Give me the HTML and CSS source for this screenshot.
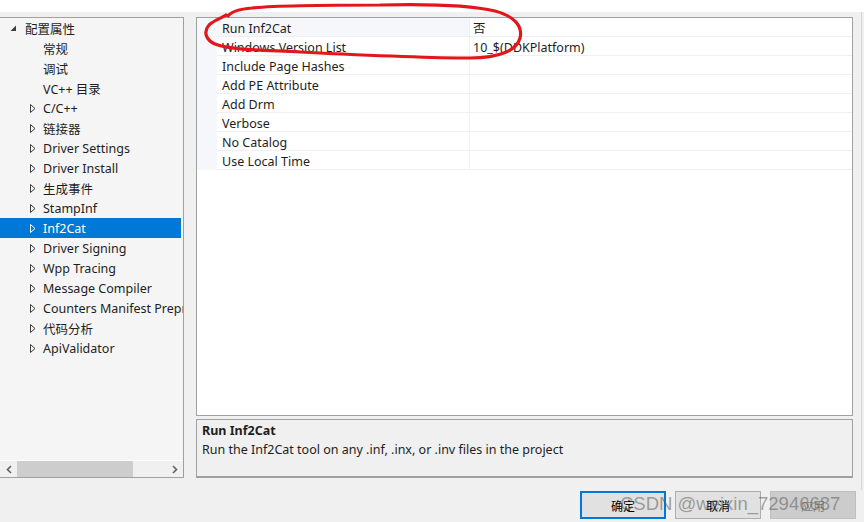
FILE: index.html
```html
<!DOCTYPE html>
<html lang="zh">
<head>
<meta charset="utf-8">
<title>属性页</title>
<link rel="stylesheet" href="styles.css">
</head>
<body>
<div class="topstrip"></div>
<div class="main">
  <div class="tree-panel">
    <div class="tree">
      <div class="node root"><span class="tw"><svg width="7" height="7" viewBox="0 0 7 7"><path d="M6 0.5 L6 6 L0.5 6 Z" fill="#3c3c3c"/></svg></span><span class="label">配置属性</span></div>
      <div class="node leaf"><span class="label">常规</span></div>
      <div class="node leaf"><span class="label">调试</span></div>
      <div class="node leaf"><span class="label">VC++ 目录</span></div>
      <div class="node"><span class="tw"><svg width="6" height="9" viewBox="0 0 6 9"><path d="M0.5 0.5 L5 4.5 L0.5 8.5 Z" fill="none" stroke="#3c3c3c"/></svg></span><span class="label">C/C++</span></div>
      <div class="node"><span class="tw"><svg width="6" height="9" viewBox="0 0 6 9"><path d="M0.5 0.5 L5 4.5 L0.5 8.5 Z" fill="none" stroke="#3c3c3c"/></svg></span><span class="label">链接器</span></div>
      <div class="node"><span class="tw"><svg width="6" height="9" viewBox="0 0 6 9"><path d="M0.5 0.5 L5 4.5 L0.5 8.5 Z" fill="none" stroke="#3c3c3c"/></svg></span><span class="label">Driver Settings</span></div>
      <div class="node"><span class="tw"><svg width="6" height="9" viewBox="0 0 6 9"><path d="M0.5 0.5 L5 4.5 L0.5 8.5 Z" fill="none" stroke="#3c3c3c"/></svg></span><span class="label">Driver Install</span></div>
      <div class="node"><span class="tw"><svg width="6" height="9" viewBox="0 0 6 9"><path d="M0.5 0.5 L5 4.5 L0.5 8.5 Z" fill="none" stroke="#3c3c3c"/></svg></span><span class="label">生成事件</span></div>
      <div class="node"><span class="tw"><svg width="6" height="9" viewBox="0 0 6 9"><path d="M0.5 0.5 L5 4.5 L0.5 8.5 Z" fill="none" stroke="#3c3c3c"/></svg></span><span class="label">StampInf</span></div>
      <div class="node selected"><span class="tw"><svg width="6" height="9" viewBox="0 0 6 9"><path d="M0.5 0.5 L5 4.5 L0.5 8.5 Z" fill="none" stroke="#ffffff"/></svg></span><span class="label">Inf2Cat</span></div>
      <div class="node"><span class="tw"><svg width="6" height="9" viewBox="0 0 6 9"><path d="M0.5 0.5 L5 4.5 L0.5 8.5 Z" fill="none" stroke="#3c3c3c"/></svg></span><span class="label">Driver Signing</span></div>
      <div class="node"><span class="tw"><svg width="6" height="9" viewBox="0 0 6 9"><path d="M0.5 0.5 L5 4.5 L0.5 8.5 Z" fill="none" stroke="#3c3c3c"/></svg></span><span class="label">Wpp Tracing</span></div>
      <div class="node"><span class="tw"><svg width="6" height="9" viewBox="0 0 6 9"><path d="M0.5 0.5 L5 4.5 L0.5 8.5 Z" fill="none" stroke="#3c3c3c"/></svg></span><span class="label">Message Compiler</span></div>
      <div class="node"><span class="tw"><svg width="6" height="9" viewBox="0 0 6 9"><path d="M0.5 0.5 L5 4.5 L0.5 8.5 Z" fill="none" stroke="#3c3c3c"/></svg></span><span class="label">Counters Manifest Preprocessor</span></div>
      <div class="node"><span class="tw"><svg width="6" height="9" viewBox="0 0 6 9"><path d="M0.5 0.5 L5 4.5 L0.5 8.5 Z" fill="none" stroke="#3c3c3c"/></svg></span><span class="label">代码分析</span></div>
      <div class="node"><span class="tw"><svg width="6" height="9" viewBox="0 0 6 9"><path d="M0.5 0.5 L5 4.5 L0.5 8.5 Z" fill="none" stroke="#3c3c3c"/></svg></span><span class="label">ApiValidator</span></div>
    </div>
    <div class="hscroll">
      <span class="sarrow"><svg width="8" height="9" viewBox="0 0 8 9"><path d="M6 1 L2.5 4.5 L6 8" fill="none" stroke="#606060" stroke-width="1.6"/></svg></span>
      <div class="strack"><div class="sthumb"></div></div>
      <span class="sarrow"><svg width="8" height="9" viewBox="0 0 8 9"><path d="M2 1 L5.5 4.5 L2 8" fill="none" stroke="#606060" stroke-width="1.6"/></svg></span>
    </div>
  </div>
  <div class="right">
    <div class="grid-panel">
      <div class="row current"><span class="gut"></span><span class="name">Run Inf2Cat</span><span class="val">否</span></div>
      <div class="row"><span class="gut"></span><span class="name">Windows Version List</span><span class="val">10_$(DDKPlatform)</span></div>
      <div class="row"><span class="gut"></span><span class="name">Include Page Hashes</span><span class="val"></span></div>
      <div class="row"><span class="gut"></span><span class="name">Add PE Attribute</span><span class="val"></span></div>
      <div class="row"><span class="gut"></span><span class="name">Add Drm</span><span class="val"></span></div>
      <div class="row"><span class="gut"></span><span class="name">Verbose</span><span class="val"></span></div>
      <div class="row"><span class="gut"></span><span class="name">No Catalog</span><span class="val"></span></div>
      <div class="row"><span class="gut"></span><span class="name">Use Local Time</span><span class="val"></span></div>
    </div>
    <div class="desc-panel">
      <div class="desc-title">Run Inf2Cat</div>
      <div class="desc-text">Run the Inf2Cat tool on any .inf, .inx, or .inv files in the project</div>
    </div>
  </div>
</div>
<div class="footer">
  <button class="btn default">确定</button>
  <button class="btn">取消</button>
  <button class="btn disabled">应用</button>
</div>
<div class="watermark">CSDN @weixin_72946687</div>
<svg class="annot" width="864" height="80" viewBox="0 0 864 80">
  <path d="M226 15 C222 18 214 20 209 25 C203 32 206 40 215 44 C230 50 262 50 300 52 C360 55 420 58 470 58 C500 58 517 50 520 38 C523 26 514 16 495 11 C465 4 420 4 380 5 C330 5 280 5 252 8 C240 9 231 12 228 16" fill="none" stroke="#e3161c" stroke-width="3.2" stroke-linecap="round"/>
</svg>
</body>
</html>
```

FILE: styles.css
```css
* { box-sizing: border-box; }
html, body {
  margin: 0;
  padding: 0;
  width: 864px;
  height: 522px;
  overflow: hidden;
}
body {
  background: #f0f0f0;
  font-family: "Noto Sans", "Noto Sans CJK SC", sans-serif;
  font-size: 12.5px;
  color: #1e1e1e;
  position: relative;
}
.topstrip {
  height: 12px;
  background: #ffffff;
}
.main {
  display: flex;
  gap: 12px;
  padding-top: 5px;
  height: 478px;
  border-right: 1px solid #d8d8d8;
  width: 862px;
}
.tree-panel {
  margin-left: -1px;
  width: 185px;
  height: 461px;
  border: 1px solid #a0a0a0;
  background: #f5f5f5;
  display: flex;
  flex-direction: column;
  overflow: hidden;
}
.tree {
  flex: 1;
  overflow: hidden;
}
.node {
  height: 20px;
  display: flex;
  align-items: center;
  white-space: nowrap;
  padding-left: 30px;
  overflow: hidden;
}
.node .tw {
  width: 13px;
  flex: none;
  display: flex;
  align-items: center;
}
.node .label {
  flex: none;
}
.node.root {
  padding-left: 10px;
}
.node.root .tw { width: 15px; }
.node.leaf { padding-left: 43px; }
.node.selected {
  background: #0078d7;
  color: #ffffff;
  margin-right: 2px;
}
.hscroll {
  height: 17px;
  display: flex;
  align-items: center;
  background: #f0f0f0;
  border-top: 1px solid #ffffff;
}
.sarrow {
  width: 17px;
  height: 17px;
  display: flex;
  align-items: center;
  justify-content: center;
}
.strack {
  flex: 1;
  height: 16px;
}
.sthumb {
  width: 116px;
  height: 100%;
  background: #cdcdcd;
}
.right {
  width: 657px;
  display: flex;
  flex-direction: column;
  gap: 3px;
}
.grid-panel {
  height: 399px;
  border: 1px solid #a0a0a0;
  background: #ffffff;
}
.row {
  display: flex;
  height: 19px;
  border-bottom: 1px solid #f0f0f3;
}
.row .gut {
  width: 20px;
  flex: none;
  background: #f5f7fa;
  margin-bottom: -1px;
}
.row .name {
  width: 253px;
  flex: none;
  padding-left: 5px;
  padding-top: 3px;
  border-right: 1px solid #f0f0f3;
  line-height: 15px;
  white-space: nowrap;
}
.row.current .name {
  background: #f5f7fa;
}
.row .val {
  flex: 1;
  padding-left: 3px;
  padding-top: 3px;
  line-height: 15px;
  white-space: nowrap;
}
.desc-panel {
  height: 59px;
  border: 1px solid #a0a0a0;
  border-bottom: 2px solid #a0a0a0;
  background: #f0f0f0;
  padding: 2px 5px 1px;
}
.desc-title {
  font-weight: bold;
  line-height: 18px;
}
.desc-text {
  line-height: 19px;
}
.footer {
  display: flex;
  justify-content: flex-end;
  gap: 9px;
  padding-top: 1px;
  padding-right: 8px;
}
.btn {
  width: 86px;
  height: 28px;
  background: #e1e1e1;
  border: 1px solid #adadad;
  font-family: "Noto Sans CJK SC", sans-serif;
  font-size: 12px;
  color: #000000;
  padding: 0;
}
.btn.default {
  border: 2px solid #0078d7;
}
.btn.disabled {
  background: #cccccc;
  border-color: #bfbfbf;
  color: #838383;
}
.watermark {
  position: absolute;
  left: 620px;
  top: 492px;
  font-family: "Liberation Sans", sans-serif;
  font-size: 18.5px;
  line-height: 24px;
  color: rgba(90, 90, 90, 0.55);
  white-space: nowrap;
  pointer-events: none;
}
.annot {
  position: absolute;
  left: 0;
  top: 0;
  pointer-events: none;
}
```
